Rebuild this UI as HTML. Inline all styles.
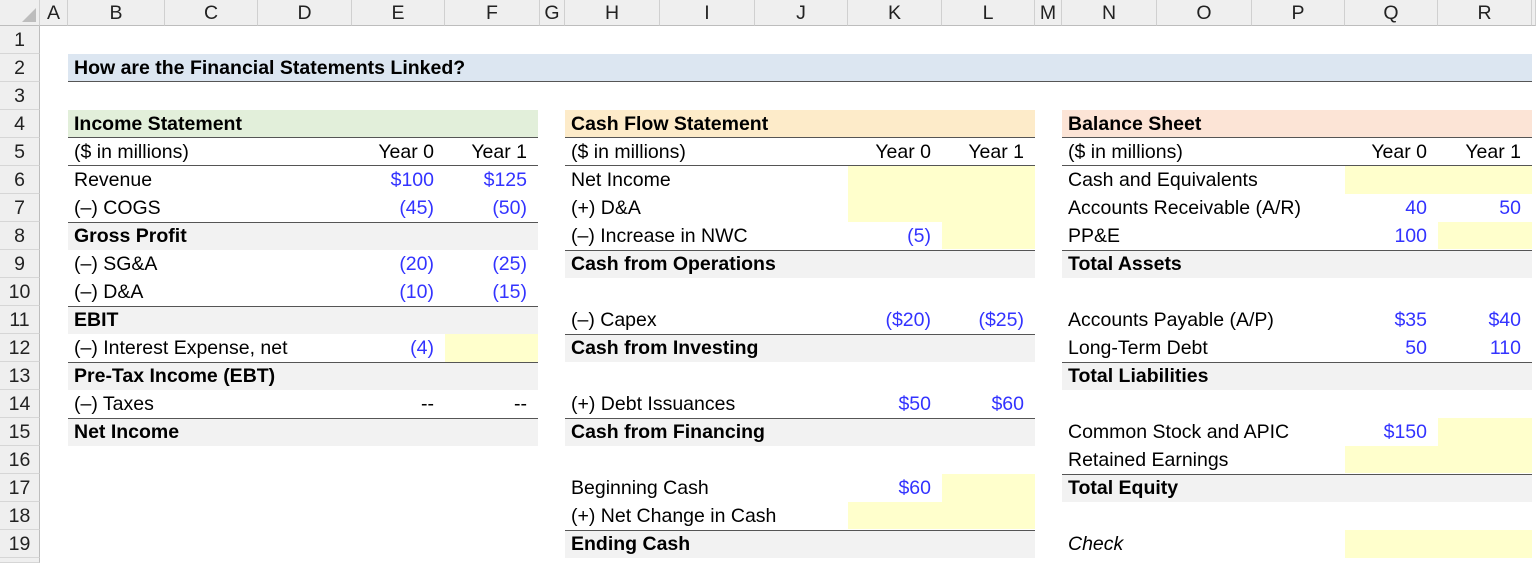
<!DOCTYPE html>
<html style="margin:0;width:1536px;height:563px;overflow:hidden"><head><meta charset="utf-8"><style>
body{margin:0;width:1536px;height:563px;overflow:hidden;background:#fff;font-family:"Liberation Sans",Arial,sans-serif;position:relative}
div{position:absolute;box-sizing:border-box}
.h{top:0;height:26px;background:#efefef;border-right:1px solid #d0d0d0;border-bottom:1px solid #bdbdbd;font-size:19.5px;text-align:center;line-height:26px;color:#222}
.rn{left:0;width:40px;height:28px;background:#efefef;border-right:1px solid #bdbdbd;border-bottom:1px solid #d6d6d6;font-size:19.5px;text-align:center;line-height:28px;color:#222}
.f{height:28px}
.t{height:28px;line-height:28px;font-size:19.5px;white-space:nowrap;color:#000}
.l{padding-left:6px}
.r{text-align:right;padding-right:11px}
.b{font-weight:bold}
.bl{color:#3333ff}
.y{background:#ffffcc;height:28px}
.g{background:#f2f2f2;height:28px;border-top:1px solid #555}
.ln{height:1px;background:#555}
</style></head><body>
<div class="h" style="left:0;width:40px"></div>
<div style="left:22px;top:8px;width:0;height:0;border-left:14px solid transparent;border-bottom:14px solid #bdbdbd"></div>
<div class="h" style="left:40px;width:28px">A</div>
<div class="h" style="left:68px;width:97px">B</div>
<div class="h" style="left:165px;width:93px">C</div>
<div class="h" style="left:258px;width:94px">D</div>
<div class="h" style="left:352px;width:93px">E</div>
<div class="h" style="left:445px;width:95px">F</div>
<div class="h" style="left:540px;width:25px">G</div>
<div class="h" style="left:565px;width:95px">H</div>
<div class="h" style="left:660px;width:95px">I</div>
<div class="h" style="left:755px;width:93px">J</div>
<div class="h" style="left:848px;width:94px">K</div>
<div class="h" style="left:942px;width:93px">L</div>
<div class="h" style="left:1035px;width:27px">M</div>
<div class="h" style="left:1062px;width:95px">N</div>
<div class="h" style="left:1157px;width:95px">O</div>
<div class="h" style="left:1252px;width:93px">P</div>
<div class="h" style="left:1345px;width:93px">Q</div>
<div class="h" style="left:1438px;width:94px">R</div>
<div class="h" style="left:1532px;width:4px"></div>
<div class="rn" style="top:26px">1</div><div class="rn" style="top:54px">2</div><div class="rn" style="top:82px">3</div><div class="rn" style="top:110px">4</div><div class="rn" style="top:138px">5</div><div class="rn" style="top:166px">6</div><div class="rn" style="top:194px">7</div><div class="rn" style="top:222px">8</div><div class="rn" style="top:250px">9</div><div class="rn" style="top:278px">10</div><div class="rn" style="top:306px">11</div><div class="rn" style="top:334px">12</div><div class="rn" style="top:362px">13</div><div class="rn" style="top:390px">14</div><div class="rn" style="top:418px">15</div><div class="rn" style="top:446px">16</div><div class="rn" style="top:474px">17</div><div class="rn" style="top:502px">18</div><div class="rn" style="top:530px">19</div><div class="rn" style="top:558px;height:5px"></div>

<div class="f" style="left:68px;top:54px;width:1464px;background:#dce6f1;border-bottom:1px solid #555"></div>
<div class="t l b" style="left:68px;top:54px">How are the Financial Statements Linked?</div>

<div class="f" style="left:68px;top:110px;width:470px;background:#e2efda;border-bottom:1px solid #555"></div>
<div class="f" style="left:565px;top:110px;width:470px;background:#fdebc9;border-bottom:1px solid #555"></div>
<div class="f" style="left:1062px;top:110px;width:470px;background:#fce4d6;border-bottom:1px solid #555"></div>
<div class="ln" style="left:68px;top:165px;width:470px"></div>
<div class="ln" style="left:565px;top:165px;width:470px"></div>
<div class="ln" style="left:1062px;top:165px;width:470px"></div>

<div class="g" style="left:68px;top:222px;width:470px"></div>
<div class="g" style="left:68px;top:306px;width:470px"></div>
<div class="g" style="left:68px;top:362px;width:470px"></div>
<div class="g" style="left:68px;top:418px;width:470px"></div>
<div class="g" style="left:565px;top:250px;width:470px"></div>
<div class="g" style="left:565px;top:334px;width:470px"></div>
<div class="g" style="left:565px;top:418px;width:470px"></div>
<div class="g" style="left:565px;top:530px;width:470px"></div>
<div class="g" style="left:1062px;top:250px;width:470px"></div>
<div class="g" style="left:1062px;top:362px;width:470px"></div>
<div class="g" style="left:1062px;top:474px;width:470px"></div>

<div class="y" style="left:445px;top:334px;width:93px"></div>
<div class="y" style="left:848px;top:166px;width:187px;height:56px"></div>
<div class="y" style="left:942px;top:222px;width:93px;height:27px"></div>
<div class="y" style="left:942px;top:474px;width:93px"></div>
<div class="y" style="left:848px;top:502px;width:187px;height:27px"></div>
<div class="y" style="left:1345px;top:166px;width:187px"></div>
<div class="y" style="left:1438px;top:222px;width:94px;height:27px"></div>
<div class="y" style="left:1438px;top:418px;width:94px"></div>
<div class="y" style="left:1345px;top:446px;width:187px;height:27px"></div>
<div class="y" style="left:1345px;top:530px;width:187px"></div>

<div class="t l b" style="left:68px;top:110px">Income Statement</div>
<div class="t l" style="left:68px;top:138px">($ in millions)</div>
<div class="t r" style="left:352px;top:138px;width:93px">Year 0</div>
<div class="t r" style="left:445px;top:138px;width:93px">Year 1</div>
<div class="t l" style="left:68px;top:166px">Revenue</div>
<div class="t r bl" style="left:352px;top:166px;width:93px">$100</div>
<div class="t r bl" style="left:445px;top:166px;width:93px">$125</div>
<div class="t l" style="left:68px;top:194px">(–) COGS</div>
<div class="t r bl" style="left:352px;top:194px;width:93px">(45)</div>
<div class="t r bl" style="left:445px;top:194px;width:93px">(50)</div>
<div class="t l b" style="left:68px;top:222px">Gross Profit</div>
<div class="t l" style="left:68px;top:250px">(–) SG&amp;A</div>
<div class="t r bl" style="left:352px;top:250px;width:93px">(20)</div>
<div class="t r bl" style="left:445px;top:250px;width:93px">(25)</div>
<div class="t l" style="left:68px;top:278px">(–) D&amp;A</div>
<div class="t r bl" style="left:352px;top:278px;width:93px">(10)</div>
<div class="t r bl" style="left:445px;top:278px;width:93px">(15)</div>
<div class="t l b" style="left:68px;top:306px">EBIT</div>
<div class="t l" style="left:68px;top:334px">(–) Interest Expense, net</div>
<div class="t r bl" style="left:352px;top:334px;width:93px">(4)</div>
<div class="t l b" style="left:68px;top:362px">Pre-Tax Income (EBT)</div>
<div class="t l" style="left:68px;top:390px">(–) Taxes</div>
<div class="t r" style="left:352px;top:390px;width:93px">--</div>
<div class="t r" style="left:445px;top:390px;width:93px">--</div>
<div class="t l b" style="left:68px;top:418px">Net Income</div>

<div class="t l b" style="left:565px;top:110px">Cash Flow Statement</div>
<div class="t l" style="left:565px;top:138px">($ in millions)</div>
<div class="t r" style="left:848px;top:138px;width:94px">Year 0</div>
<div class="t r" style="left:942px;top:138px;width:93px">Year 1</div>
<div class="t l" style="left:565px;top:166px">Net Income</div>
<div class="t l" style="left:565px;top:194px">(+) D&amp;A</div>
<div class="t l" style="left:565px;top:222px">(–) Increase in NWC</div>
<div class="t r bl" style="left:848px;top:222px;width:94px">(5)</div>
<div class="t l b" style="left:565px;top:250px">Cash from Operations</div>
<div class="t l" style="left:565px;top:306px">(–) Capex</div>
<div class="t r bl" style="left:848px;top:306px;width:94px">($20)</div>
<div class="t r bl" style="left:942px;top:306px;width:93px">($25)</div>
<div class="t l b" style="left:565px;top:334px">Cash from Investing</div>
<div class="t l" style="left:565px;top:390px">(+) Debt Issuances</div>
<div class="t r bl" style="left:848px;top:390px;width:94px">$50</div>
<div class="t r bl" style="left:942px;top:390px;width:93px">$60</div>
<div class="t l b" style="left:565px;top:418px">Cash from Financing</div>
<div class="t l" style="left:565px;top:474px">Beginning Cash</div>
<div class="t r bl" style="left:848px;top:474px;width:94px">$60</div>
<div class="t l" style="left:565px;top:502px">(+) Net Change in Cash</div>
<div class="t l b" style="left:565px;top:530px">Ending Cash</div>

<div class="t l b" style="left:1062px;top:110px">Balance Sheet</div>
<div class="t l" style="left:1062px;top:138px">($ in millions)</div>
<div class="t r" style="left:1345px;top:138px;width:93px">Year 0</div>
<div class="t r" style="left:1438px;top:138px;width:94px">Year 1</div>
<div class="t l" style="left:1062px;top:166px">Cash and Equivalents</div>
<div class="t l" style="left:1062px;top:194px">Accounts Receivable (A/R)</div>
<div class="t r bl" style="left:1345px;top:194px;width:93px">40</div>
<div class="t r bl" style="left:1438px;top:194px;width:94px">50</div>
<div class="t l" style="left:1062px;top:222px">PP&amp;E</div>
<div class="t r bl" style="left:1345px;top:222px;width:93px">100</div>
<div class="t l b" style="left:1062px;top:250px">Total Assets</div>
<div class="t l" style="left:1062px;top:306px">Accounts Payable (A/P)</div>
<div class="t r bl" style="left:1345px;top:306px;width:93px">$35</div>
<div class="t r bl" style="left:1438px;top:306px;width:94px">$40</div>
<div class="t l" style="left:1062px;top:334px">Long-Term Debt</div>
<div class="t r bl" style="left:1345px;top:334px;width:93px">50</div>
<div class="t r bl" style="left:1438px;top:334px;width:94px">110</div>
<div class="t l b" style="left:1062px;top:362px">Total Liabilities</div>
<div class="t l" style="left:1062px;top:418px">Common Stock and APIC</div>
<div class="t r bl" style="left:1345px;top:418px;width:93px">$150</div>
<div class="t l" style="left:1062px;top:446px">Retained Earnings</div>
<div class="t l b" style="left:1062px;top:474px">Total Equity</div>
<div class="t l" style="left:1062px;top:530px;font-style:italic">Check</div>
</body></html>
